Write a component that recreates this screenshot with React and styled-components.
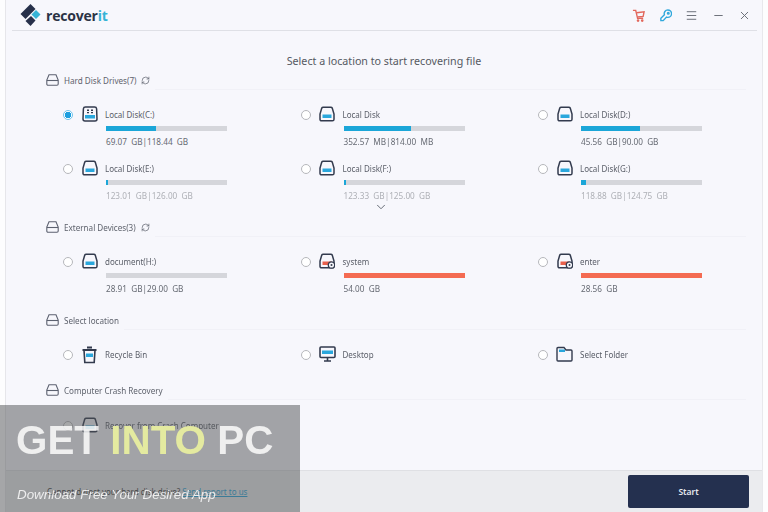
import React from "react";
import styled, { createGlobalStyle } from "styled-components";
import { Menu, Minus, RefreshCw, X, ChevronDown } from "lucide-react";

const hardDisks = [
  { name: "Local Disk(C:)", size: "69.07  GB|118.44  GB", used: 41, icon: "system", checked: true },
  { name: "Local Disk", size: "352.57  MB|814.00  MB", used: 56, icon: "drive" },
  { name: "Local Disk(D:)", size: "45.56  GB|90.00  GB", used: 49, icon: "drive" },
  { name: "Local Disk(E:)", size: "123.01  GB|126.00  GB", used: 2, icon: "drive", faded: true },
  { name: "Local Disk(F:)", size: "123.33  GB|125.00  GB", used: 2, icon: "drive", faded: true },
  { name: "Local Disk(G:)", size: "118.88  GB|124.75  GB", used: 4, icon: "drive", faded: true },
];

const externalDevices = [
  { name: "document(H:)", size: "28.91  GB|29.00  GB", used: 0, icon: "drive" },
  { name: "system", size: "54.00  GB", used: 100, icon: "error", error: true },
  { name: "enter", size: "28.56  GB", used: 100, icon: "error", error: true },
];

const locations = [
  { name: "Recycle Bin", icon: "bin" },
  { name: "Desktop", icon: "desktop" },
  { name: "Select Folder", icon: "folder" },
];

const DriveIcon = ({ type }) => {
  const dark = "#333b4e";
  const blue = "#2aa7dc";
  if (type === "bin") {
    return (
      <svg width="17" height="18" viewBox="0 0 17 18" fill="none">
        <path d="M6 1.500h5M1.500 4h14" stroke={dark} strokeWidth="1.800" />
        <path d="M3 4l.8 12.500h9.400L14 4z" stroke={dark} strokeWidth="1.600" />
        <rect x="5" y="7.500" width="7" height="3.500" fill={blue} />
      </svg>
    );
  }
  if (type === "desktop") {
    return (
      <svg width="17" height="16" viewBox="0 0 17 16" fill="none">
        <rect x="1" y="1" width="15" height="10.500" rx="1" stroke={dark} strokeWidth="1.600" />
        <rect x="3" y="4.500" width="11" height="3.500" fill={blue} />
        <path d="M8.500 12v2.500M5 15h7" stroke={dark} strokeWidth="1.600" />
      </svg>
    );
  }
  if (type === "folder") {
    return (
      <svg width="17" height="16" viewBox="0 0 17 16" fill="none">
        <path d="M1 2.500a1 1 0 0 1 1-1h6l2 2.500h5a1 1 0 0 1 1 1v9a1 1 0 0 1-1 1H2a1 1 0 0 1-1-1z" stroke={dark} strokeWidth="1.400" />
        <rect x="3" y="3.500" width="6" height="2.500" fill={blue} />
      </svg>
    );
  }
  if (type === "system") {
    return (
      <svg width="16" height="16" viewBox="0 0 16 16" fill="none">
        <path d="M3.500 1h9c1.300 0 2 .7 2.100 1.800L15 13c0 1.300-.7 2-2 2H3c-1.300 0-2-.7-2-2l.4-10.200C1.500 1.700 2.200 1 3.500 1z" stroke={dark} strokeWidth="1.500" />
        <path d="M5 3.500h2v1.500H5zM9 3.500h2v1.500H9zM5 6h2v1.300H5zM9 6h2v1.300H9z" fill={dark} />
        <rect x="3" y="9" width="10" height="3.500" fill={blue} />
      </svg>
    );
  }
  return (
    <svg width="16" height="16" viewBox="0 0 16 16" fill="none">
      <path d="M4.200 1.200h7.600c.8 0 1.200.4 1.500 1L15 8v5.200c0 1-.6 1.600-1.600 1.600H2.600C1.600 14.800 1 14.200 1 13.200V8l1.700-5.800c.3-.6.700-1 1.500-1z" stroke={dark} strokeWidth="1.500" />
      <rect x="3.500" y="8.500" width="9" height="3.500" fill={type === "error" ? "#e8604c" : blue} />
      {type === "error" && <circle cx="12.500" cy="12" r="3.200" fill="#f7f7fc" stroke={dark} strokeWidth="1.300" />}
      {type === "error" && <circle cx="12.500" cy="12" r="1" fill={dark} />}
    </svg>
  );
};

const SectionIcon = () => (
  <svg width="13" height="12" viewBox="0 0 13 12" fill="none" stroke="#5d6270" strokeWidth="1.100">
    <path d="M3 .8h7l2.200 5.200v4c0 .7-.5 1.200-1.200 1.200H2c-.7 0-1.200-.5-1.200-1.200V6z" />
    <path d="M1 6.500h11" />
  </svg>
);

const CartIcon = () => (
  <svg width="13" height="13" viewBox="0 0 14 14" fill="none" stroke="#e2675c" strokeWidth="1.500">
    <path d="M1 1.500h3l2 8.500h6" />
    <path d="M5 4l8-1-1 5-6 .5" />
    <circle cx="6.500" cy="12.500" r=".7" />
    <circle cx="11" cy="12.500" r=".7" />
  </svg>
);

const KeyIcon = () => (
  <svg width="13" height="13" viewBox="0 0 14 14" fill="none" stroke="#30a8dc" strokeWidth="1.500">
    <path d="M9.500 1a4 4 0 0 1 0 8c-.5 0-1-.1-1.400-.3L4.500 12.500H2V10l3.800-3.800A4 4 0 0 1 9.500 1z" />
    <circle cx="10" cy="4.500" r=".9" />
  </svg>
);

const Logo = () => (
  <svg width="22" height="24" viewBox="0 0 22 24">
    <path d="M10.500 1l5 5-10 10-5-5z" fill="#27304a" />
    <path d="M11 13l4.500 4.500-5 5.500-5-5z" fill="#27304a" />
    <path d="M16 7l4.500 4.500L16 16l-4.500-4.500z" fill="#35b3d6" />
  </svg>
);

const DeviceRow = ({ device }) => (
  <Row>
    <Radio $checked={device.checked} />
    <IconSlot>
      <DriveIcon type={device.icon} />
    </IconSlot>
    <Body>
      <Name>{device.name}</Name>
      {device.size && (
        <>
          <Track>
            <Fill $error={device.error} style={{ width: `${device.used}%` }} />
          </Track>
          <Size $faded={device.faded}>{device.size}</Size>
        </>
      )}
    </Body>
  </Row>
);

const Section = ({ title, refresh, devices, $gap, $end, children }) => (
  <SectionBox $end={$end}>
    <SectionHead>
      <SectionIcon />
      <SectionTitle>{title}</SectionTitle>
      {refresh && <RefreshCw size={9} color="#555a66" strokeWidth={1.800} />}
      <HeadRule />
    </SectionHead>
    <Rows $gap={$gap}>
      {devices.map((device) => (
        <DeviceRow key={device.name} device={device} />
      ))}
    </Rows>
    {children}
  </SectionBox>
);

const App = () => (
  <Page>
    <GlobalStyle />
    <Window>
      <Header>
        <Brand>
          <Logo />
          <BrandName>
            recover<span>it</span>
          </BrandName>
        </Brand>
        <Tools>
          <CartIcon />
          <KeyIcon />
          <Menu size={13} color="#6b6f78" strokeWidth={1.800} />
          <Minus size={13} color="#6b6f78" strokeWidth={1.800} />
          <X size={13} color="#6b6f78" strokeWidth={1.800} />
        </Tools>
      </Header>
      <Main>
        <Title>Select a location to start recovering file</Title>
        <Section title="Hard Disk Drives(7)" refresh devices={hardDisks} $end={1}>
          <More>
            <ChevronDown size={14} color="#555a66" strokeWidth={1.500} />
          </More>
        </Section>
        <Section title="External Devices(3)" refresh devices={externalDevices} $end={1} />
        <Section title="Select location" devices={locations} $end={0} />
        <Section title="Computer Crash Recovery" devices={[{ name: "Recover from Crash Computer", icon: "drive" }]} $gap={19} $end={0} />
      </Main>
      <Footer>
        <Hint>
          Cannot detect your hard disk drive? <HintLink>Send report to us</HintLink>
        </Hint>
        <StartButton>Start</StartButton>
      </Footer>
    </Window>
    <Watermark>
      <Mark>
        GET <em>INTO</em> PC
      </Mark>
      <Tagline>Download Free Your Desired App</Tagline>
    </Watermark>
  </Page>
);

export default App;

const GlobalStyle = createGlobalStyle`
  html, body {
    margin: 0;
    padding: 0;
    background: #fff;
    font-family: "Noto Sans", "Open Sans", sans-serif;
  }
`;

const Page = styled.div`
  position: relative;
  width: 768px;
  height: 512px;
  overflow: hidden;
  padding: 0 5px;
  box-sizing: border-box;
  background: #fdfdfe;
`;

const Window = styled.div`
  display: flex;
  flex-direction: column;
  height: 100%;
  background: #f7f7fc;
  border-left: 1px solid #e6e6ea;
  border-right: 1px solid #e8e8ec;
  filter: blur(0.5px);
`;

const Header = styled.header`
  display: flex;
  flex: none;
  align-items: center;
  justify-content: space-between;
  height: 30px;
  margin: 0 5px 0 6px;
  padding: 0 6px 0 8px;
  border-bottom: 1px solid #dfe0e6;
`;

const Brand = styled.div`
  display: flex;
  align-items: center;
  gap: 4px;
`;

const BrandName = styled.div`
  font-family: "Open Sans", sans-serif;
  font-size: 14px;
  font-weight: 700;
  letter-spacing: -0.2px;
  color: #2b3345;

  span {
    color: #35b3d6;
  }
`;

const Tools = styled.div`
  display: flex;
  align-items: center;
  gap: 13.500px;
`;

const Main = styled.main`
  position: relative;
  flex: 1;
  padding-left: 40px;
`;

const Title = styled.h1`
  margin: 0 0 0 -40px;
  padding-top: 22px;
  height: 17px;
  box-sizing: content-box;
  text-align: center;
  font-size: 10.700px;
  font-weight: 400;
  line-height: 17px;
  color: #555962;
`;

const SectionBox = styled.section`
  position: relative;
  margin-bottom: ${({ $end }) => $end}px;
`;

const SectionHead = styled.div`
  display: flex;
  align-items: center;
  gap: 5px;
  height: 20px;
`;

const SectionTitle = styled.span`
  font-size: 8.100px;
  color: #5f636d;
`;

const HeadRule = styled.span`
  flex: 1;
  align-self: flex-end;
  height: 1px;
  margin-right: 16px;
  background: #f1f1f7;
`;

const Rows = styled.div`
  display: grid;
  grid-template-columns: repeat(3, 237.5px);
  padding: ${({ $gap }) => $gap || 18}px 0 0 17px;
`;

const Row = styled.div`
  display: flex;
  align-items: flex-start;
  min-height: 32px;
`;

const Radio = styled.span`
  flex: none;
  width: 10px;
  height: 10px;
  margin-top: 2px;
  box-sizing: border-box;
  border-radius: 50%;
  border: 1px solid ${({ $checked }) => ($checked ? "#6ec3ec" : "#b5b6bb")};
  background: ${({ $checked }) =>
    $checked ? "radial-gradient(circle, #1c9fe0 0 3px, #fff 3.500px)" : "#fff"};
`;

const IconSlot = styled.span`
  display: flex;
  flex: none;
  justify-content: center;
  width: 17px;
  margin: -2px 7px 0 8px;
`;

const Body = styled.div`
  width: 122px;
`;

const Name = styled.div`
  font-size: 8px;
  line-height: 14px;
  color: #5a5e68;
  white-space: nowrap;
`;

const Track = styled.div`
  height: 5px;
  margin: 4px 0 0 1px;
  background: #d5d6db;
`;

const Fill = styled.div`
  height: 100%;
  background: ${({ $error }) => ($error ? "#f46b52" : "#1ba6d8")};
`;

const Size = styled.div`
  margin: 4px 0 13px 1px;
  font-size: 8.200px;
  line-height: 14px;
  white-space: pre;
  color: ${({ $faded }) => ($faded ? "#aeb0b6" : "#666a73")};
`;

const More = styled.div`
  position: absolute;
  left: 328px;
  bottom: 2px;
  line-height: 0;
`;

const Footer = styled.footer`
  display: flex;
  flex: none;
  align-items: center;
  justify-content: space-between;
  height: 41px;
  padding: 0 13px 0 41px;
  background: #ebecef;
  border-top: 1px solid #dfe0e4;
`;

const Hint = styled.span`
  font-size: 8px;
  color: #444;
`;

const HintLink = styled.span`
  color: #2aa7dc;
  text-decoration: underline;
`;

const StartButton = styled.button`
  width: 121px;
  height: 33px;
  border: 0;
  border-radius: 2px;
  background: #24304f;
  color: #e6e8ee;
  font-family: inherit;
  font-size: 8.500px;
  font-weight: 600;
`;

const Watermark = styled.div`
  position: absolute;
  left: 0;
  bottom: 0;
  width: 300px;
  height: 107px;
  background: rgba(78, 80, 82, 0.5);
  color: rgba(255, 255, 255, 0.82);
`;

const Mark = styled.div`
  margin: 11px 0 0 16px;
  font-family: "Liberation Sans", sans-serif;
  font-size: 40.400px;
  font-weight: 700;
  line-height: 48px;
  white-space: nowrap;
  filter: blur(0.5px);

  em {
    font-style: normal;
    color: #e4eaa0;
  }
`;

const Tagline = styled.div`
  margin: 22px 0 0 17px;
  font-family: "Liberation Sans", sans-serif;
  font-size: 13.400px;
  font-style: italic;
  line-height: 18px;
  white-space: nowrap;
  filter: blur(0.5px);
`;
